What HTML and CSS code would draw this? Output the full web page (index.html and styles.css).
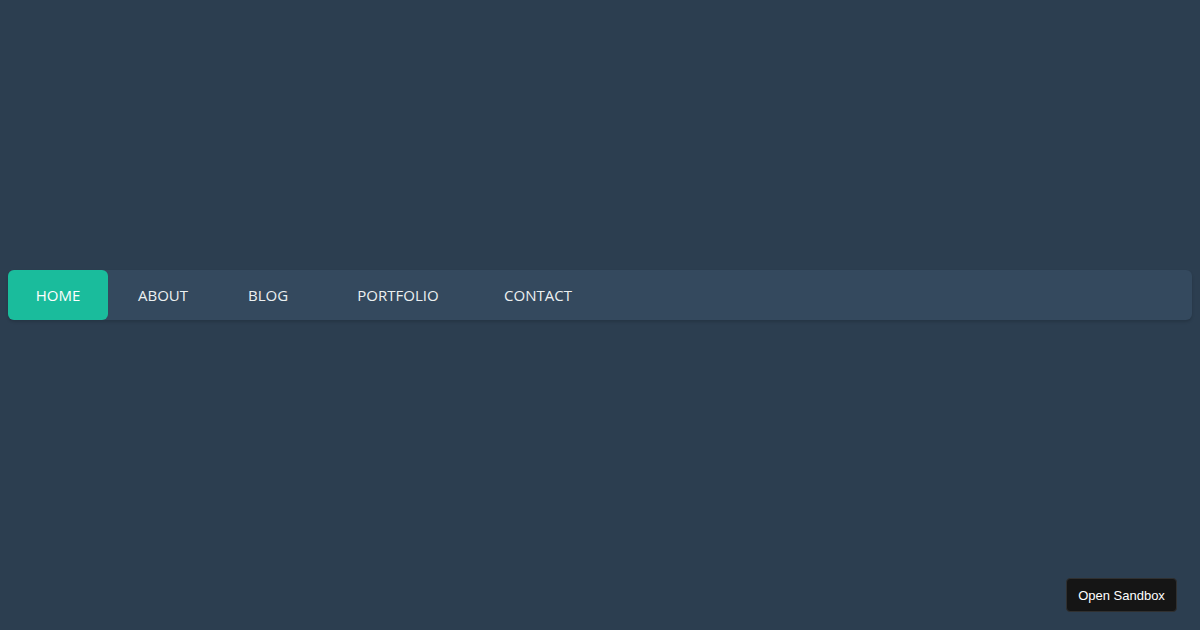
FILE: index.html
```html
<!DOCTYPE html>
<html>
<head>
<meta charset="utf-8">
<link rel="stylesheet" href="styles.css">
</head>
<body>
<main class="stage">
  <nav class="nav">
    <a class="nav-item w100 active">HOME</a>
    <a class="nav-item w110">ABOUT</a>
    <a class="nav-item w100">BLOG</a>
    <a class="nav-item w160">PORTFOLIO</a>
    <a class="nav-item w120">CONTACT</a>
  </nav>
</main>
<a class="sandbox-btn">Open Sandbox</a>
</body>
</html>
```
FILE: styles.css
```css
html, body {
  margin: 0;
  padding: 0;
  height: 100%;
  background: #2c3e50;
}
body {
  font-family: "Open Sans", "Liberation Sans", sans-serif;
}
.stage {
  height: 630px;
  padding: 270px 8px 0;
  box-sizing: border-box;
}
.nav {
  display: flex;
  height: 50px;
  background: #34495e;
  border-radius: 6px;
  box-shadow: 0 2px 3px rgba(0, 0, 0, 0.15);
}
.nav-item {
  display: flex;
  align-items: center;
  justify-content: center;
  height: 50px;
  color: #ecf0f1;
  font-size: 15px;
  text-decoration: none;
  border-radius: 6px;
}
.nav-item.active {
  background: #1abc9c;
  color: #ffffff;
}
.w100 { width: 100px; }
.w110 { width: 110px; }
.w120 { width: 120px; }
.w160 { width: 160px; }
.sandbox-btn {
  position: fixed;
  right: 23px;
  bottom: 18px;
  width: 111px;
  height: 34px;
  box-sizing: border-box;
  display: flex;
  align-items: center;
  justify-content: center;
  background: #151515;
  border: 1px solid #303030;
  border-radius: 4px;
  color: #ffffff;
  font-family: "Liberation Sans", Arial, sans-serif;
  font-size: 13px;
}
```
